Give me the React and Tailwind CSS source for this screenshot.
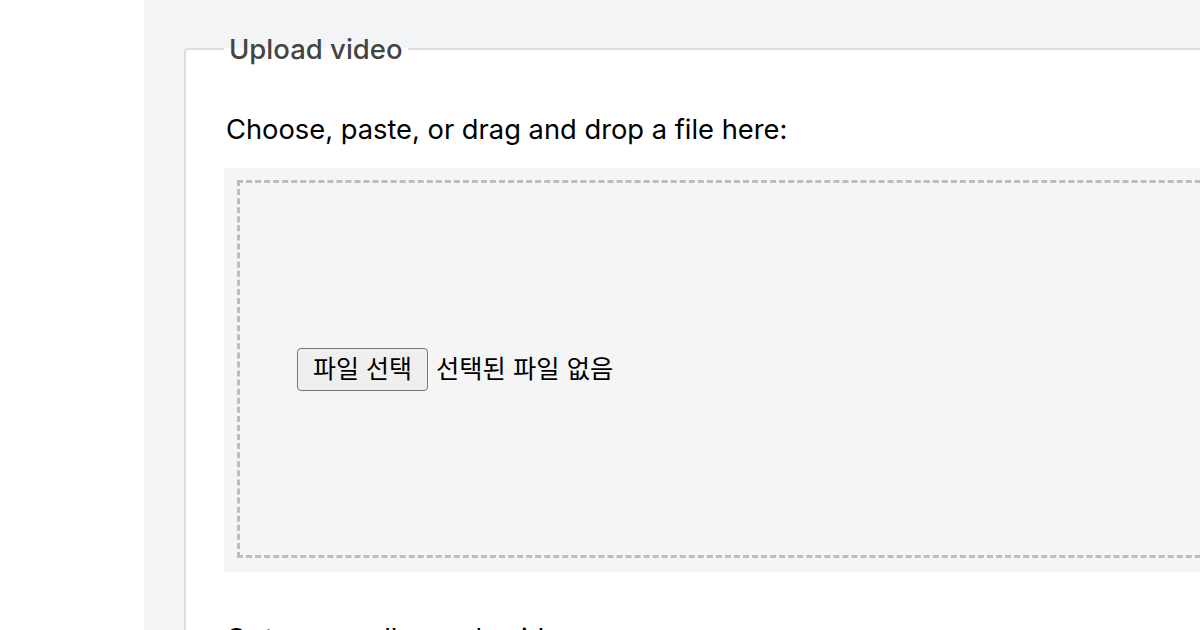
import React from "react";

const sans = { fontFamily: "Inter, 'Noto Sans CJK KR', sans-serif" };

export default function App() {
  return (
    <div className="flex h-[630px] w-[1200px] overflow-hidden bg-white text-black" style={sans}>
      <div className="w-[144px] shrink-0" />
      <div className="flex-1 overflow-hidden bg-[#f3f4f6] pl-[40px] pt-[34px]">
        <fieldset className="w-[1100px] rounded-[4px] border-2 border-[#dedede] bg-white pb-6 pl-[38px] pr-6">
          <legend className="px-[5px] text-[27.5px] font-medium leading-[30px] text-[#444]">Upload video</legend>
          <p className="mt-[50px] pl-[2px] text-[27.3px] leading-[32px]">Choose, paste, or drag and drop a file here:</p>
          <div className="mt-[22px] bg-[#f5f5f5] p-3 pb-[14px] pl-[13px]">
            <div className="flex h-[378px] items-center border-[3px] border-dashed border-[#bdbdbd] pl-[57px]">
              <button className="h-[43px] rounded-[4px] border border-[#767676] bg-[#efefef] pl-[15px] pr-[15px] text-[25px] leading-none">
                파일 선택
              </button>
              <span className="ml-2 text-[25.3px]">선택된 파일 없음</span>
            </div>
          </div>
          <p className="mt-[51px] pl-[2px] text-[27.3px] leading-[32px]">Or try a small sample video:</p>
        </fieldset>
      </div>
    </div>
  );
}
